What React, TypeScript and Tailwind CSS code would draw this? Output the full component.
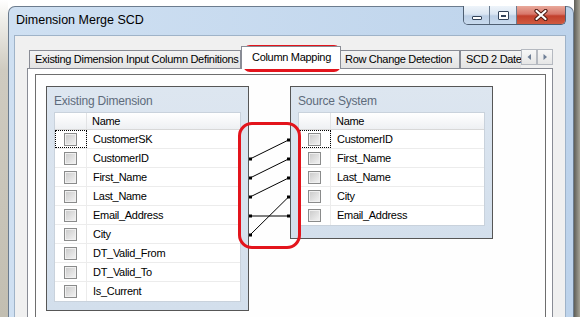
import React from "react";

const EXISTING = ["CustomerSK", "CustomerID", "First_Name", "Last_Name", "Email_Address", "City", "DT_Valid_From", "DT_Valid_To", "Is_Current"];
const SOURCE = ["CustomerID", "First_Name", "Last_Name", "City", "Email_Address"];

// [left y, right y] in connector-local coords (panel top = 0)
const LINKS: [number, number][] = [
  [73, 54],
  [92, 73],
  [111, 92],
  [130, 130],
  [149, 111],
];

function CaptionButtons() {
  return (
    <div className="-mt-[1px] flex h-[19px] overflow-hidden rounded-b-[5px] border border-t-0 border-[#4f5f72]">
      <div className="flex w-[26px] items-end justify-center border-r border-[#6a7b8f] bg-[linear-gradient(to_bottom,#eef4fa_0%,#dbe6f2_45%,#bccfe5_55%,#c9dbee_100%)] pb-[4px]">
        <span className="block h-[4px] w-[10px] rounded-[1px] border border-[#34445a] bg-white" />
      </div>
      <div className="flex w-[27px] items-center justify-center border-r border-[#6a7b8f] bg-[linear-gradient(to_bottom,#eef4fa_0%,#dbe6f2_45%,#bccfe5_55%,#c9dbee_100%)] pt-[1px]">
        <span className="block h-[9px] w-[11px] rounded-[1px] border border-[#34445a] bg-white p-[2px] pt-[3px]">
          <span className="block h-full w-full border border-[#34445a] bg-[#c9d8ea]" />
        </span>
      </div>
      <div className="flex w-[48px] items-center justify-center bg-[linear-gradient(to_bottom,#e9a99b_0%,#d8776a_45%,#c2402c_55%,#d05a3f_100%)]">
        <svg width="14" height="12" viewBox="0 0 14 12">
          <path d="M2.5 2 L11.5 10 M11.5 2 L2.5 10" stroke="#4a1a12" strokeWidth="4.2" strokeLinecap="round" />
          <path d="M2.5 2 L11.5 10 M11.5 2 L2.5 10" stroke="#ffffff" strokeWidth="2.2" strokeLinecap="round" />
        </svg>
      </div>
    </div>
  );
}

function Tab({ label, className }: { label: string; className: string }) {
  return (
    <div className={"flex shrink-0 items-center overflow-hidden whitespace-nowrap border border-b-0 text-[11px] tracking-[-0.3px] " + className}>
      {label}
    </div>
  );
}

function Checkbox() {
  return <span className="block h-[13px] w-[13px] border border-[#8a8b8b] bg-[linear-gradient(135deg,#c9c9c9,#f4f4f4)] shadow-[inset_0_0_0_1px_#f0f0f0]" />;
}

function ColumnPanel({ title, rows, className }: { title: string; rows: string[]; className: string }) {
  return (
    <div className={"flex w-[203px] shrink-0 flex-col border border-[#565656] bg-[linear-gradient(to_bottom,#dde6f0,#d3dfec)] px-[7px] " + className}>
      <div className="h-[25px] shrink-0 pt-[7px] text-[12px] leading-[14px] tracking-[-0.2px] text-[#5e6b7b]">{title}</div>
      <div className="shrink-0 border border-[#c9d2dc] bg-white">
        <div className="flex h-[17px] border-b border-[#d8d8d8] bg-[linear-gradient(to_bottom,#ffffff,#eef0f3)] text-[11px] leading-[16px] tracking-[-0.3px]">
          <div className="w-[32px] border-r border-[#e2e3e5]" />
          <div className="pl-[5px]">Name</div>
        </div>
        {rows.map((r, i) => (
          <div key={r} className={"flex h-[19px] text-[11px] tracking-[-0.3px] " + (i < rows.length - 1 ? "border-b border-[#ececec]" : "")}>
            <div className={"flex w-[32px] items-center justify-center border-r border-[#ececec] " + (i === 0 ? "outline-1 -outline-offset-1 outline-dotted outline-black" : "")}>
              <Checkbox />
            </div>
            <div className="flex items-center pl-[6px]">{r}</div>
          </div>
        ))}
      </div>
    </div>
  );
}

function Connectors() {
  return (
    <svg width="41" height="225" viewBox="0 0 41 225" className="shrink-0">
      {LINKS.map(([a, b], i) => (
        <g key={i}>
          <line x1="1" y1={a} x2="39.5" y2={b} stroke="#000" strokeWidth="1" />
          <rect x="0" y={a - 1.5} width="3" height="3" fill="#000" />
          <rect x="38" y={b - 1.5} width="3" height="3" fill="#000" />
        </g>
      ))}
    </svg>
  );
}

export default function App() {
  return (
    <div className="relative flex h-[317px] w-[580px] overflow-hidden bg-white font-['Liberation_Sans',Arial,sans-serif] text-black">
      <div className="w-[8px] shrink-0 bg-[linear-gradient(to_bottom,#ffffff_0px,#f0efeb_18px,#cfcbc0_70px,#c2beb1_317px)]" />

      <div className="mt-[6px] flex w-[566px] shrink-0 flex-col rounded-t-[7px] border border-b-0 border-[#6c7c8e] bg-[linear-gradient(to_right,#cfe0f2,#bdd3eb)] pl-[5px] pr-[7px]">
        <div className="flex h-[28px] shrink-0 items-start justify-between">
          <span className="mt-[6px] pl-[2px] text-[12.5px] leading-[14px]">Dimension Merge SCD</span>
          <CaptionButtons />
        </div>

        <div className="flex min-h-0 flex-1 flex-col border border-b-0 border-[#9fb3c8] bg-[#f0f0f0] pl-[12px] pr-[12px] pt-[10px]">
          <div className="flex h-[22px] shrink-0 items-end pl-[2px]">
            <Tab label="Existing Dimension Input Column Definitions" className="h-[18px] w-[212px] border-[#898c95] bg-[linear-gradient(to_bottom,#f3f3f3,#e3e3e3)] pl-[5px]" />
            <Tab label="Column Mapping" className="relative z-10 -mb-[1px] h-[23px] w-[100px] border-[#898c95] bg-white pb-[2px] pl-[10px]" />
            <Tab label="Row Change Detection" className="h-[18px] w-[119px] border-l-0 border-[#898c95] bg-[linear-gradient(to_bottom,#f3f3f3,#e3e3e3)] pl-[4px]" />
            <Tab label="SCD 2 Date" className="h-[18px] w-[61px] border-r-0 border-[#898c95] bg-[linear-gradient(to_bottom,#f3f3f3,#e3e3e3)] pl-[5px]" />
            <div className="mb-[3px] flex h-[16px] shrink-0 self-end">
              {["M5 2 L1.5 5 L5 8 Z", "M1.5 2 L5 5 L1.5 8 Z"].map((d) => (
                <div key={d} className="flex w-[16px] items-center justify-center border border-[#b5b9c0] bg-[linear-gradient(to_bottom,#f7f7f7,#e6e6e6)]">
                  <svg width="7" height="10" viewBox="0 0 7 10">
                    <path d={d} fill="#6f7f96" />
                  </svg>
                </div>
              ))}
            </div>
          </div>

          <div className="flex min-h-0 flex-1 flex-col border border-b-0 border-[#898c95] bg-white pl-[7px] pr-[6px] pt-[5px]">
            <div className="flex min-h-0 flex-1 items-start overflow-hidden border border-b-0 border-[#6e6e6e] bg-[#fefefe] pl-[10px] pt-[11px]">
              <ColumnPanel title="Existing Dimension" rows={EXISTING} className="h-[225px]" />
              <Connectors />
              <ColumnPanel title="Source System" rows={SOURCE} className="h-[153px]" />
            </div>
          </div>
        </div>
      </div>

      <div className="w-[6px] shrink-0 bg-[linear-gradient(to_right,#5f5f58,#a6a396)]" />

      <div className="pointer-events-none absolute left-[243px] top-[45px] h-[27px] w-[98px] rounded-[7px] border-[3px] border-[#e3141c]" />
      <div className="pointer-events-none absolute left-[238px] top-[122px] h-[127px] w-[63px] rounded-[14px] border-[3px] border-[#e3141c]" />
    </div>
  );
}
